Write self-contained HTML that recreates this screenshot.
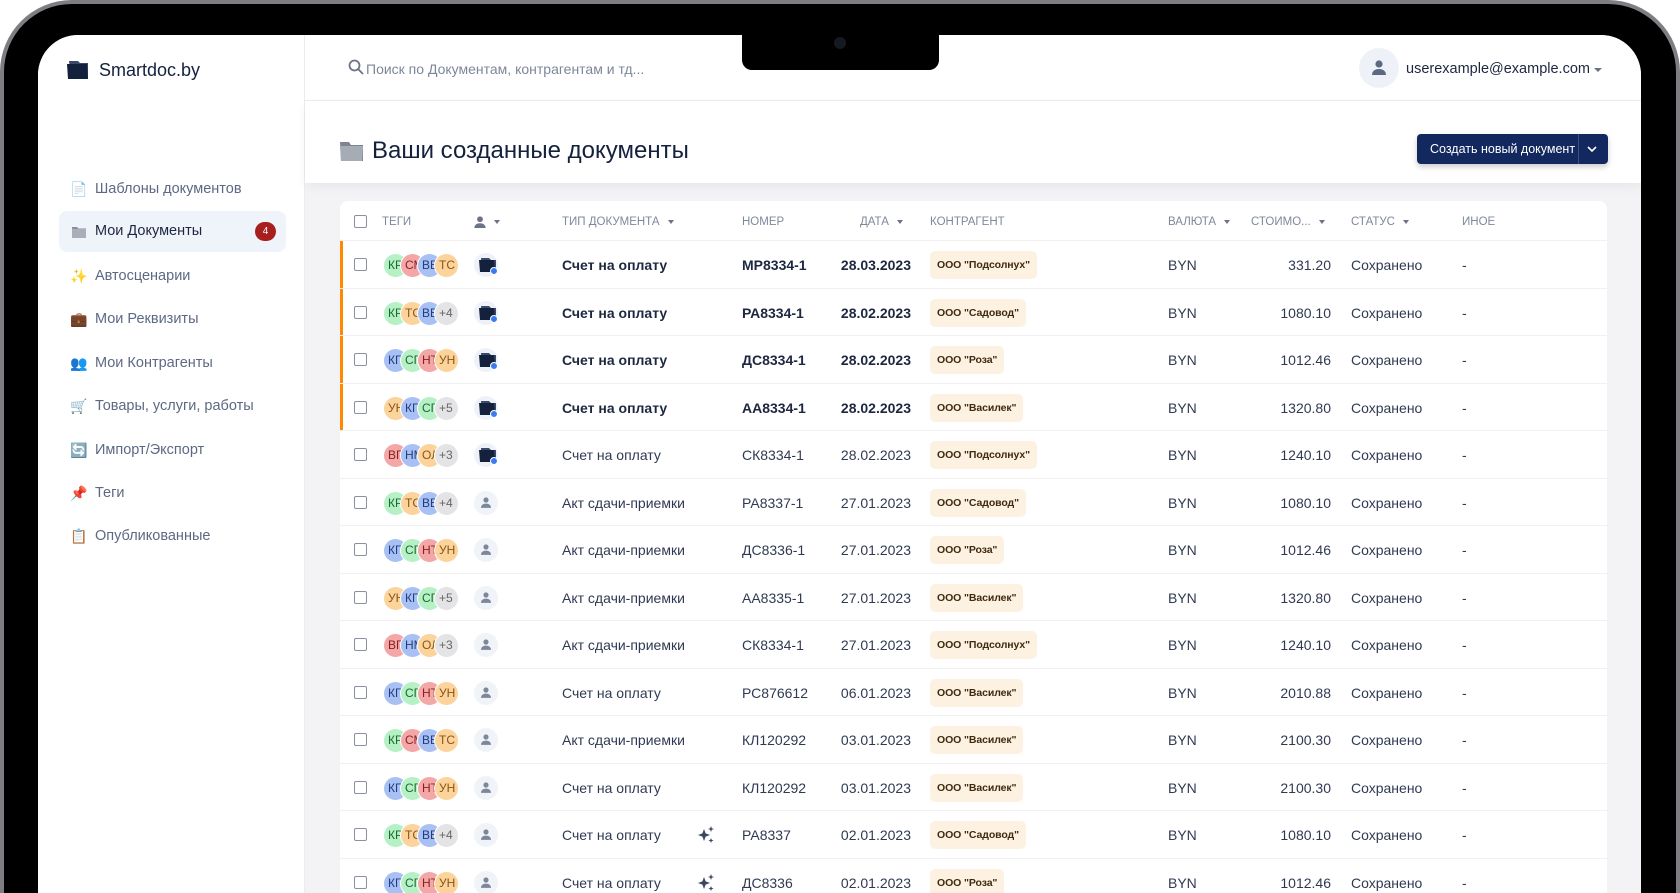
<!DOCTYPE html>
<html style="overflow:hidden;width:1680px;height:893px"><head><meta charset="utf-8">
<style>
*{box-sizing:border-box;margin:0;padding:0}
body{width:1680px;height:893px;overflow:hidden;background:#fff;font-family:"Liberation Sans",sans-serif;position:relative;color:#1d2740}
.wrap{position:absolute;left:0;top:0;width:1680px;height:893px;overflow:hidden}
.bez{position:absolute;left:0;top:0;width:1680px;height:893px;border-radius:72px 72px 0 0;background:#7d7d82}
.blk{position:absolute;left:4px;top:4px;right:4px;bottom:0;border-radius:68px 68px 0 0;background:#000}
.scr{position:absolute;left:38px;top:35px;width:1603px;height:858px;border-radius:40px 40px 0 0;background:#f3f3f5;overflow:hidden}
.notch{position:absolute;left:742px;top:35px;width:197px;height:35px;background:#000;border-radius:0 0 10px 10px}
.cam{position:absolute;left:834px;top:37px;width:12px;height:12px;border-radius:50%;background:#111827;border:2px solid #1a1a1a}
.side{position:absolute;left:0;top:0;width:267px;height:858px;background:#fff;border-right:1px solid #ececef}
.logo{position:absolute;left:28px;top:25px;width:24px;height:20px}
.brand{position:absolute;left:61px;top:25px;font-size:18px;color:#14213d}
.mi{position:absolute;left:21px;width:227px;height:41px;border-radius:8px;font-size:14.5px;color:#5d6983;line-height:41px;padding-left:36px}
.mi .ic{position:absolute;left:11px;top:0;font-size:14px;width:18px;text-align:center}
.mi.act{background:#eff4fb;color:#1d2740}
.badge{position:absolute;right:10px;top:11px;width:21px;height:19px;border-radius:10px;background:#a81f1f;color:#fff;font-size:10px;line-height:19px;text-align:center;padding:0}
.hdr{position:absolute;left:267px;top:0;right:0;height:66px;background:#fff;border-bottom:1px solid #ececef}
.search{position:absolute;left:43px;top:24px}
.ph{position:absolute;left:61px;top:26px;font-size:14px;color:#7d879b}
.av{position:absolute;left:1054px;top:13px;width:40px;height:40px;border-radius:50%;background:#eef2f8}
.email{position:absolute;left:1101px;top:26px;font-size:14.5px;color:#1d2740}
.tit{position:absolute;left:267px;top:66px;right:0;height:82px;background:#fff;box-shadow:0 4px 10px rgba(0,0,0,.05)}
.tit h1{position:absolute;left:67px;top:36px;font-size:24px;font-weight:normal;color:#14213d}
.btn{position:absolute;left:1112px;top:33px;width:191px;height:30px;border-radius:4px;background:#13285e;color:#fff;font-size:12.5px;line-height:30px;padding-left:13px;box-shadow:0 3px 6px rgba(0,0,0,.2)}
.btn .dv{position:absolute;left:161px;top:0;width:1px;height:30px;background:#3c4f80}
.card{position:absolute;left:302px;top:166px;width:1267px;height:700px;background:#fff;border-radius:8px}
.th{position:absolute;top:0;height:40px;left:0;right:0;border-bottom:1px solid #f1f1f3}
.th span{position:absolute;top:15px;font-size:11.5px;color:#7f889b;text-transform:uppercase}
.ar{display:inline-block;margin-left:8px;border-left:3px solid transparent;border-right:3px solid transparent;border-top:4px solid #6b7385;vertical-align:middle}
.row{position:absolute;left:0;right:0;height:47.5px;border-bottom:1px solid #f1f1f3;font-size:14px;color:#2f3a52}
.row>*{position:absolute}
.row.hl::before{content:"";position:absolute;left:0;top:0;width:3px;height:100%;background:#ff8a00}
.cb{left:14px;top:17px;width:13px;height:13px;border:1.6px solid #8a90a0;border-radius:2px}
.th .cb{position:absolute;top:14px}
.tags{left:43px;top:12px;height:24px;width:90px}
.tg{position:absolute;top:0;width:25px;height:25px;border-radius:50%;border:1.5px solid #fff;font-size:12px;line-height:22px;text-indent:4px;overflow:hidden;white-space:nowrap}
.g{background:#b6f1c5;color:#1a6a2f}.r{background:#f3a7a7;color:#8a1f1f}.b{background:#a8c0f3;color:#1f3c80}.o{background:#fbd39b;color:#8a5516}.x{background:#e4e4e6;color:#666;text-indent:4px}
.uic{left:134px;top:12px;width:24px;height:24px;border-radius:50%;background:#f0f3f8}
.dic{left:134px;top:12px;width:24px;height:24px;border-radius:50%;background:#eef2f8}
.typ{left:222px;top:16px}
.spk{left:356px;top:14px}
.num{left:402px;top:16px}
.dt{left:480px;width:91px;text-align:right;top:16px}
.pill{left:590px;top:10px;height:28px;line-height:28px;padding:0 7px;background:#fdf2e2;border-radius:5px;font-size:10.5px;color:#3e2a10;font-weight:bold;letter-spacing:-.1px}
.cur{left:828px;top:16px}
.cost{left:900px;width:91px;text-align:right;top:16px}
.st{left:1011px;top:16px}
.oth{left:1122px;top:16px}
.bd{font-weight:bold;color:#1d2740}
</style></head><body>
<div class="wrap">
<div class="bez"><div class="blk"></div></div>
<div class="scr">
 <div class="side">
  <svg class="logo" viewBox="0 0 24 20"><path d="M3 1h9l2 2h8v15H5z" fill="#3b4a6b"/><path d="M1 4h20l1 15H2z" fill="#14213d"/></svg>
  <div class="brand">Smartdoc.by</div>
  <div class="mi" style="top:134px"><span class="ic">📄</span>Шаблоны документов</div>
  <div class="mi act" style="top:176px"><span class="ic"><svg width="16" height="14" viewBox="0 0 16 14" style="vertical-align:middle"><path d="M1 2h5l1.5 1.5H15V13H1z" fill="#8a8f99"/><path d="M1 4h14v9H1z" fill="#a9aeb8"/></svg></span>Мои Документы<span class="badge">4</span></div>
  <div class="mi" style="top:221px"><span class="ic" style="color:#f5c518">✨</span>Автосценарии</div>
  <div class="mi" style="top:264px"><span class="ic">💼</span>Мои Реквизиты</div>
  <div class="mi" style="top:308px"><span class="ic">👥</span>Мои Контрагенты</div>
  <div class="mi" style="top:351px"><span class="ic">🛒</span>Товары, услуги, работы</div>
  <div class="mi" style="top:395px"><span class="ic">🔄</span>Импорт/Экспорт</div>
  <div class="mi" style="top:438px"><span class="ic">📌</span>Теги</div>
  <div class="mi" style="top:481px"><span class="ic">📋</span>Опубликованные</div>
 </div>
 <div class="hdr">
  <svg class="search" width="16" height="16" viewBox="0 0 16 16"><circle cx="6.5" cy="6.5" r="5" fill="none" stroke="#6b7385" stroke-width="1.8"/><path d="M10.3 10.3L15 15" stroke="#6b7385" stroke-width="1.8"/></svg>
  <div class="ph">Поиск по Документам, контрагентам и тд...</div>
  <div class="av"><svg style="position:absolute;left:13px;top:12px" width="14" height="15" viewBox="0 0 14 15"><circle cx="7" cy="4" r="3.6" fill="#5d6983"/><path d="M0 15c0-4 3-6 7-6s7 2 7 6z" fill="#5d6983"/></svg></div>
  <div class="email">userexample@example.com</div>
  <div style="position:absolute;left:1289px;top:33px;border-left:4px solid transparent;border-right:4px solid transparent;border-top:4px solid #6b7385"></div>
 </div>
 <div class="tit">
  <svg style="position:absolute;left:34px;top:39px" width="26" height="22" viewBox="0 0 26 22"><path d="M1 2h9l2 3h12v16H2z" fill="#7f8590"/><path d="M1 6h23l-1 15H2z" fill="#a6acb6"/></svg>
  <h1>Ваши созданные документы</h1>
  <div class="btn">Создать новый документ<span class="dv"></span><svg style="position:absolute;left:170px;top:11px" width="10" height="8" viewBox="0 0 10 8"><path d="M1 2l4 4 4-4" fill="none" stroke="#fff" stroke-width="1.6"/></svg></div>
 </div>
 <div class="card">
  <div class="th">
   <div class="cb"></div>
   <span style="left:42px">Теги</span>
   <span style="left:134px"><svg width="12" height="12" viewBox="0 0 14 15" style="vertical-align:middle"><circle cx="7" cy="4" r="3.6" fill="#6b7385"/><path d="M0 15c0-4 3-6 7-6s7 2 7 6z" fill="#6b7385"/></svg><i class="ar"></i></span>
   <span style="left:222px">Тип документа<i class="ar"></i></span>
   <span style="left:402px">Номер</span>
   <span style="left:520px">Дата<i class="ar"></i></span>
   <span style="left:590px">Контрагент</span>
   <span style="left:828px">Валюта<i class="ar"></i></span>
   <span style="left:911px">Стоимо...<i class="ar"></i></span>
   <span style="left:1011px">Статус<i class="ar"></i></span>
   <span style="left:1122px">Иное</span>
  </div>
  <div id="rows"></div>
 </div>
</div>
<div class="notch"></div><div class="cam"></div>
</div>
<script>
var D=[
["g:КР r:СМ b:ВЕ o:ТС",1,"Счет на оплату","МР8334-1","28.03.2023","Подсолнух","331.20",1,0],
["g:КР o:ТС b:ВЕ x:+4",1,"Счет на оплату","РА8334-1","28.02.2023","Садовод","1080.10",1,0],
["b:КГ g:СГ r:НТ o:УН",1,"Счет на оплату","ДС8334-1","28.02.2023","Роза","1012.46",1,0],
["o:УН b:КГ g:СГ x:+5",1,"Счет на оплату","АА8334-1","28.02.2023","Василек","1320.80",1,0],
["r:ВГ b:НМ o:ОЛ x:+3",1,"Счет на оплату","СК8334-1","28.02.2023","Подсолнух","1240.10",0,0],
["g:КР o:ТС b:ВЕ x:+4",0,"Акт сдачи-приемки","РА8337-1","27.01.2023","Садовод","1080.10",0,0],
["b:КГ g:СГ r:НТ o:УН",0,"Акт сдачи-приемки","ДС8336-1","27.01.2023","Роза","1012.46",0,0],
["o:УН b:КГ g:СГ x:+5",0,"Акт сдачи-приемки","АА8335-1","27.01.2023","Василек","1320.80",0,0],
["r:ВГ b:НМ o:ОЛ x:+3",0,"Акт сдачи-приемки","СК8334-1","27.01.2023","Подсолнух","1240.10",0,0],
["b:КГ g:СГ r:НТ o:УН",0,"Счет на оплату","РС876612","06.01.2023","Василек","2010.88",0,0],
["g:КР r:СМ b:ВЕ o:ТС",0,"Акт сдачи-приемки","КЛ120292","03.01.2023","Василек","2100.30",0,0],
["b:КГ g:СГ r:НТ o:УН",0,"Счет на оплату","КЛ120292","03.01.2023","Василек","2100.30",0,0],
["g:КР o:ТС b:ВЕ x:+4",0,"Счет на оплату","РА8337","02.01.2023","Садовод","1080.10",0,1],
["b:КГ g:СГ r:НТ o:УН",0,"Счет на оплату","ДС8336","02.01.2023","Роза","1012.46",0,1]];
var h="";
D.forEach(function(d,i){
 var t=d[0].split(" ").map(function(s,k){var p=s.split(":");return '<div class="tg '+p[0]+'" style="left:'+(k*17)+'px">'+p[1]+'</div>'}).join("");
 var ic=d[1]?'<div class="dic"><svg style="position:absolute;left:4px;top:4px" width="20" height="18" viewBox="0 0 20 18"><path d="M3 1h8l2 2h5v11H4z" fill="#3b4a6b"/><path d="M1 3h15l1 12H2z" fill="#14213d"/><circle cx="16" cy="14" r="3.5" fill="#3b7bf0" stroke="#fff"/></svg></div>':'<div class="uic"><svg style="position:absolute;left:7px;top:6px" width="10" height="11" viewBox="0 0 14 15"><circle cx="7" cy="4" r="3.6" fill="#7d879b"/><path d="M0 15c0-4 3-6 7-6s7 2 7 6z" fill="#7d879b"/></svg></div>';
 var b=d[7]?' bd':'';
 h+='<div class="row'+(d[7]?' hl':'')+'" style="top:'+(40+i*47.5)+'px"><div class="cb"></div><div class="tags">'+t+'</div>'+ic+
 '<div class="typ'+b+'">'+d[2]+'</div>'+(d[8]?'<svg class="spk" width="20" height="20" viewBox="0 0 20 20"><path d="M8 4l1.6 4.4L14 10l-4.4 1.6L8 16l-1.6-4.4L2 10l4.4-1.6z" fill="#3d4660"/><path d="M15 1l.8 2.2L18 4l-2.2.8L15 7l-.8-2.2L12 4l2.2-.8z" fill="#3d4660"/><path d="M15 13l.7 1.8 1.8.7-1.8.7L15 18l-.7-1.8-1.8-.7 1.8-.7z" fill="#3d4660"/></svg>':'')+
 '<div class="num'+b+'">'+d[3]+'</div><div class="dt'+b+'">'+d[4]+'</div><div class="pill">ООО "'+d[5]+'"</div><div class="cur">BYN</div><div class="cost">'+d[6]+'</div><div class="st">Сохранено</div><div class="oth">-</div></div>';
});
document.getElementById("rows").innerHTML=h;
</script>
</body></html>
